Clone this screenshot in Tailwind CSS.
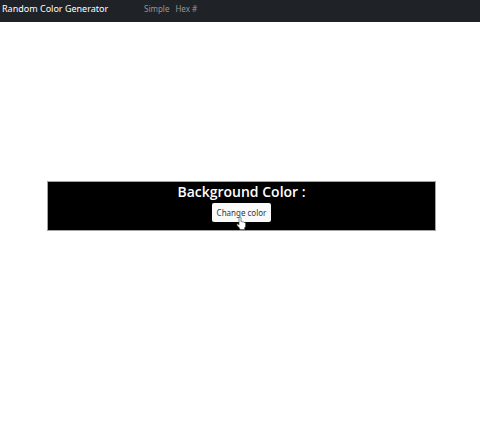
<!DOCTYPE html>
<html lang="en">
<head>
<meta charset="utf-8">
<meta name="viewport" content="width=device-width, initial-scale=1">
<title>Random Color Generator</title>
<script src="https://cdn.jsdelivr.net/npm/@tailwindcss/browser@4"></script>
</head>
<body class="min-h-screen bg-white font-['Noto_Sans','Open_Sans',sans-serif]">
<header class="bg-[#1f2328]">
  <nav class="flex h-[22px] items-start pt-[2px] pl-[2px] leading-[14px]">
    <a href="#" class="w-[142px] text-[9px] whitespace-nowrap text-white">Random Color Generator</a>
    <ul class="flex gap-[6px] text-[8px] text-[#94969a]">
      <li><a href="#">Simple</a></li>
      <li><a href="#">Hex #</a></li>
    </ul>
  </nav>
</header>
<main class="pt-40 pr-[45px] pl-12">
  <section class="flex flex-col items-center bg-black pb-2 outline outline-[#a0a3a4]">
    <h1 class="font-['Open_Sans','Noto_Sans',sans-serif] text-[14px] leading-[20px] font-semibold text-white">Background Color :</h1>
    <div class="relative pt-px">
      <button type="button" class="block h-[19px] rounded-xs bg-[#fafafa] px-[5px] text-[8px] leading-[19px] text-[#333638]">Change color</button>
      <svg class="pointer-events-none absolute top-[14px] left-6 h-[15px] w-[11px]" viewBox="0 0 11 15" aria-hidden="true">
        <path d="M3 9V2.2Q3 1 4 1T5 2.2V5.6Q6 4.900 6.600 6Q7.600 5.400 8.100 6.500Q9.500 6 9.500 7.600V10.500L8.500 12V13.500H4L3.500 12L1 9.300Q.5 8 1.800 8Z" fill="#fff" stroke="#555" stroke-width=".7" stroke-linejoin="round"/>
      </svg>
    </div>
  </section>
</main>
</body>
</html>
